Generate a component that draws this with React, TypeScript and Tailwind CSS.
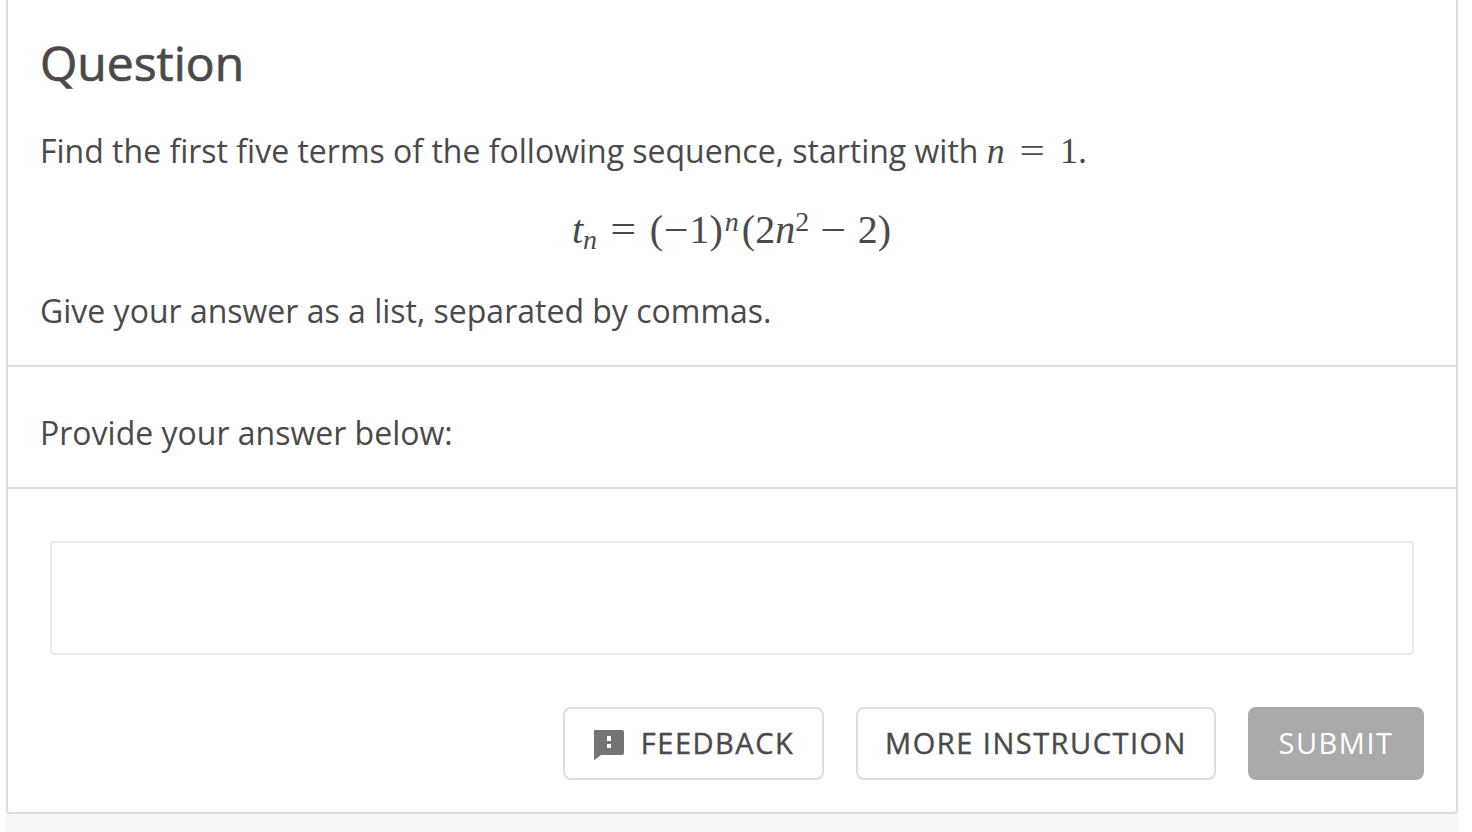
function FeedbackIcon() {
  return (
    <svg width="32" height="32" viewBox="0 0 32 32" className="shrink-0 relative top-[2px]">
      <path
        d="M2 1h27a2 2 0 0 1 2 2v21a2 2 0 0 1-2 2H8l-6.500 5a1 1 0 0 1-.5-1V2a1 1 0 0 1 1-1z"
        fill="#757575"
      />
      <rect x="14" y="7" width="4" height="5" fill="#fff" />
      <rect x="14" y="15" width="4" height="4" fill="#fff" />
    </svg>
  );
}

const serif = "font-['Liberation_Serif',serif]";

export default function App() {
  return (
    <div className="w-[1472px] h-[832px] overflow-hidden bg-white font-['Open_Sans',sans-serif] text-[#4a4a4a]">
      <div className="ml-[6px] w-[1452px] bg-[#f7f7f7]">
        <div className="h-[814px] border-x-2 border-b-2 border-[#dedede] rounded-b-[4px] bg-white flex flex-col">
          <div className="h-[367px] border-b-2 border-[#dedede] pl-[32px] pr-[33px] pt-[30px]">
            <h1 className="text-[48px] leading-[66px] [-webkit-text-stroke:0.7px_#4a4a4a]">Question</h1>
            <p className="mt-[32px] text-[32px] leading-[46px] whitespace-nowrap">
              Find the first five terms of the following sequence, starting with{" "}
              <span className={`${serif} text-[36px]`}>
                <i>n</i>
                <span className="inline-block scale-x-[1.25] ml-[17px]">=</span>
                <span className="ml-[18px]">1.</span>
              </span>
            </p>
            <div className={`mt-[33px] h-[46px] flex justify-center text-[40px] leading-[46px] whitespace-nowrap ${serif}`}>
              <span>
                <i>t</i>
                <i className="text-[28px] relative top-[6px]">n</i>
                <span className="inline-block scale-x-[1.15] mx-[15px]">=</span>
                (<span className="inline-block scale-x-[1.1] mx-[2px]">−</span>1)
                <i className="text-[28px] relative top-[-12px] ml-[2px] mr-[3px]">n</i>(2<i>n</i>
                <span className="text-[28px] relative top-[-12px]">2</span>
                <span className="inline-block scale-x-[1.15] mx-[13px]">−</span>2)
              </span>
            </div>
            <p className="mt-[35px] text-[32px] leading-[46px] whitespace-nowrap">
              Give your answer as a list, separated by commas.
            </p>
          </div>
          <div className="h-[122px] border-b-2 border-[#dedede] pl-[32px] pt-[43px]">
            <p className="text-[32px] leading-[46px]">Provide your answer below:</p>
          </div>
          <div className="flex-1 pt-[52px] pl-[42px]">
            <div className="w-[1364px] h-[114px] border-2 border-[#ececec] rounded-[4px]" />
            <div className="mt-[52px] pr-[32px] flex justify-end gap-[32px]">
              <button className="h-[73px] w-[261px] border-2 border-[#dedede] rounded-[8px] flex items-center justify-center gap-[16px] pb-[2px] text-[29px] [-webkit-text-stroke:0.4px_#4a4a4a] tracking-[1.5px]">
                <FeedbackIcon />
                FEEDBACK
              </button>
              <button className="h-[73px] w-[360px] border-2 border-[#dedede] rounded-[8px] flex items-center justify-center pb-[2px] text-[29px] [-webkit-text-stroke:0.4px_#4a4a4a] tracking-[1.5px]">
                MORE INSTRUCTION
              </button>
              <button className="h-[73px] w-[176px] rounded-[8px] bg-[#aaaaaa] flex items-center justify-center pb-[2px] text-[29px] tracking-[1.5px] text-white">
                SUBMIT
              </button>
            </div>
          </div>
        </div>
        <div className="h-[18px]" />
      </div>
    </div>
  );
}
